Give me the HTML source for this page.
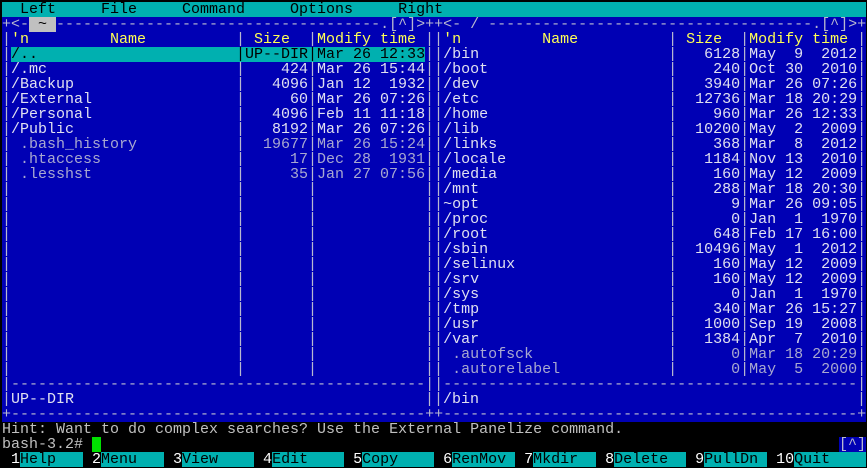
<!DOCTYPE html>
<html><head><meta charset="utf-8"><style>
html,body{margin:0;padding:0;background:#000;width:867px;height:468px;overflow:hidden}
#t{position:absolute;left:2px;top:2px;font-family:"Liberation Mono",monospace;font-size:15px;line-height:15px}
.r{height:15px;white-space:pre;width:864px;overflow:hidden}
.b{background:#0000b4;color:#b8b8d0}
.c{background:#00b0b0;color:#000}
.k{background:#000;color:#c0c0c0}
span{display:inline-block;height:15px;vertical-align:top}
.n{width:225px;color:#e0e0f0}
.z{width:63px;text-align:right;color:#e0e0f0}
.tm{width:108px;color:#e0e0f0}
.d{color:#a8a8d0}
.y{color:#ffff55}
.s{background:#00b0b0;color:#000}
.s span{color:#000}
.g{background:#c0c0c0;color:#000}
.fd{color:#fff;background:#000}
.fl{background:#00b0b0;color:#000}
</style></head><body><div id="t">
<div class="r c">  Left     File     Command     Options     Right</div>
<div class="r b">+&lt;-<span class="g"> ~ </span>------------------------------------.[^]&gt;++&lt;- / ------------------------------------.[^]&gt;+</div>
<div class="r b">|<span class="n y">'n         Name</span>|<span class="tm y" style="width:63px"> Size</span>|<span class="tm y">Modify time</span>||<span class="n y">'n         Name</span>|<span class="tm y" style="width:63px"> Size</span>|<span class="tm y">Modify time</span>|</div>
<div class="r b">|<span class="s"><span class="n">/..</span>|<span class="z">UP--DIR</span>|<span class="tm">Mar 26 12:33</span></span>||<span class="n">/bin</span>|<span class="z">6128</span>|<span class="tm">May  9  2012</span>|</div>
<div class="r b">|<span class="n">/.mc</span>|<span class="z">424</span>|<span class="tm">Mar 26 15:44</span>||<span class="n">/boot</span>|<span class="z">240</span>|<span class="tm">Oct 30  2010</span>|</div>
<div class="r b">|<span class="n">/Backup</span>|<span class="z">4096</span>|<span class="tm">Jan 12  1932</span>||<span class="n">/dev</span>|<span class="z">3940</span>|<span class="tm">Mar 26 07:26</span>|</div>
<div class="r b">|<span class="n">/External</span>|<span class="z">60</span>|<span class="tm">Mar 26 07:26</span>||<span class="n">/etc</span>|<span class="z">12736</span>|<span class="tm">Mar 18 20:29</span>|</div>
<div class="r b">|<span class="n">/Personal</span>|<span class="z">4096</span>|<span class="tm">Feb 11 11:18</span>||<span class="n">/home</span>|<span class="z">960</span>|<span class="tm">Mar 26 12:33</span>|</div>
<div class="r b">|<span class="n">/Public</span>|<span class="z">8192</span>|<span class="tm">Mar 26 07:26</span>||<span class="n">/lib</span>|<span class="z">10200</span>|<span class="tm">May  2  2009</span>|</div>
<div class="r b">|<span class="n d"> .bash_history</span>|<span class="z d">19677</span>|<span class="tm d">Mar 26 15:24</span>||<span class="n">/links</span>|<span class="z">368</span>|<span class="tm">Mar  8  2012</span>|</div>
<div class="r b">|<span class="n d"> .htaccess</span>|<span class="z d">17</span>|<span class="tm d">Dec 28  1931</span>||<span class="n">/locale</span>|<span class="z">1184</span>|<span class="tm">Nov 13  2010</span>|</div>
<div class="r b">|<span class="n d"> .lesshst</span>|<span class="z d">35</span>|<span class="tm d">Jan 27 07:56</span>||<span class="n">/media</span>|<span class="z">160</span>|<span class="tm">May 12  2009</span>|</div>
<div class="r b">|<span class="n"></span>|<span class="z"></span>|<span class="tm"></span>||<span class="n">/mnt</span>|<span class="z">288</span>|<span class="tm">Mar 18 20:30</span>|</div>
<div class="r b">|<span class="n"></span>|<span class="z"></span>|<span class="tm"></span>||<span class="n">~opt</span>|<span class="z">9</span>|<span class="tm">Mar 26 09:05</span>|</div>
<div class="r b">|<span class="n"></span>|<span class="z"></span>|<span class="tm"></span>||<span class="n">/proc</span>|<span class="z">0</span>|<span class="tm">Jan  1  1970</span>|</div>
<div class="r b">|<span class="n"></span>|<span class="z"></span>|<span class="tm"></span>||<span class="n">/root</span>|<span class="z">648</span>|<span class="tm">Feb 17 16:00</span>|</div>
<div class="r b">|<span class="n"></span>|<span class="z"></span>|<span class="tm"></span>||<span class="n">/sbin</span>|<span class="z">10496</span>|<span class="tm">May  1  2012</span>|</div>
<div class="r b">|<span class="n"></span>|<span class="z"></span>|<span class="tm"></span>||<span class="n">/selinux</span>|<span class="z">160</span>|<span class="tm">May 12  2009</span>|</div>
<div class="r b">|<span class="n"></span>|<span class="z"></span>|<span class="tm"></span>||<span class="n">/srv</span>|<span class="z">160</span>|<span class="tm">May 12  2009</span>|</div>
<div class="r b">|<span class="n"></span>|<span class="z"></span>|<span class="tm"></span>||<span class="n">/sys</span>|<span class="z">0</span>|<span class="tm">Jan  1  1970</span>|</div>
<div class="r b">|<span class="n"></span>|<span class="z"></span>|<span class="tm"></span>||<span class="n">/tmp</span>|<span class="z">340</span>|<span class="tm">Mar 26 15:27</span>|</div>
<div class="r b">|<span class="n"></span>|<span class="z"></span>|<span class="tm"></span>||<span class="n">/usr</span>|<span class="z">1000</span>|<span class="tm">Sep 19  2008</span>|</div>
<div class="r b">|<span class="n"></span>|<span class="z"></span>|<span class="tm"></span>||<span class="n">/var</span>|<span class="z">1384</span>|<span class="tm">Apr  7  2010</span>|</div>
<div class="r b">|<span class="n"></span>|<span class="z"></span>|<span class="tm"></span>||<span class="n d"> .autofsck</span>|<span class="z d">0</span>|<span class="tm d">Mar 18 20:29</span>|</div>
<div class="r b">|<span class="n"></span>|<span class="z"></span>|<span class="tm"></span>||<span class="n d"> .autorelabel</span>|<span class="z d">0</span>|<span class="tm d">May  5  2000</span>|</div>
<div class="r b">|----------------------------------------------||----------------------------------------------|</div>
<div class="r b">|<span class="n" style="width:414px">UP--DIR</span>||<span class="n" style="width:414px">/bin</span>|</div>
<div class="r b">+----------------------------------------------++----------------------------------------------+</div>
<div class="r k">Hint: Want to do complex searches? Use the External Panelize command.</div>
<div class="r k">bash-3.2# <span style="width:9px;background:#00e000"></span><span style="width:738px"></span><span style="background:#0000b4;color:#b8b8d0">[^]</span></div>
<div class="r k"><span class="fd"> 1</span><span class="fl" style="width:63px">Help</span><span class="fd"> 2</span><span class="fl" style="width:63px">Menu</span><span class="fd"> 3</span><span class="fl" style="width:72px">View</span><span class="fd"> 4</span><span class="fl" style="width:72px">Edit</span><span class="fd"> 5</span><span class="fl" style="width:72px">Copy</span><span class="fd"> 6</span><span class="fl" style="width:63px">RenMov</span><span class="fd"> 7</span><span class="fl" style="width:63px">Mkdir</span><span class="fd"> 8</span><span class="fl" style="width:72px">Delete</span><span class="fd"> 9</span><span class="fl" style="width:63px">PullDn</span><span class="fd"> 10</span><span class="fl" style="width:72px">Quit</span></div>
</div></body></html>
